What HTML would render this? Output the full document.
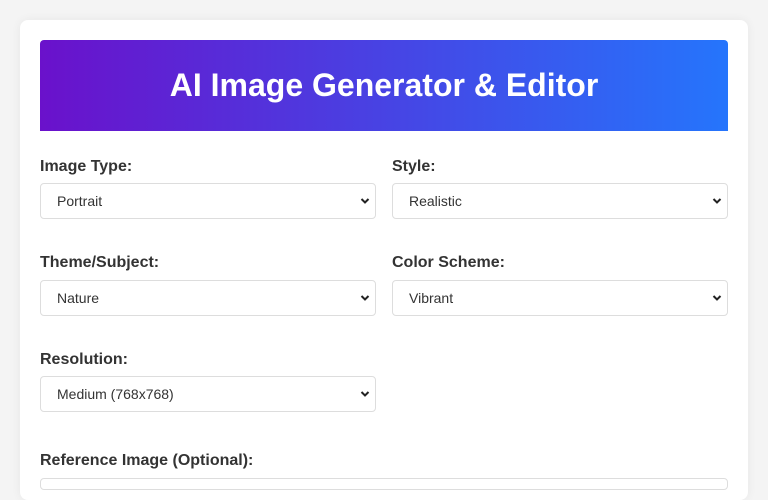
<!DOCTYPE html>
<html><head><style>
body{margin:0;width:768px;height:480px;overflow:hidden;background:#f4f4f4;font-family:"Liberation Sans",sans-serif;position:relative}
.card{position:absolute;left:20px;top:20px;width:728px;height:480px;background:#fff;border-radius:8px;box-shadow:0 0 10px rgba(0,0,0,.06)}
.hdr{position:absolute;left:40px;top:40px;width:688px;height:91px;background:linear-gradient(90deg,#6a11cb,#2575fc);color:#fff;font-weight:bold;font-size:32px;text-align:center;line-height:91px;border-radius:4px 4px 0 0}
.lb{position:absolute;font-weight:bold;font-size:16px;color:#333;line-height:18px}
.sel{position:absolute;width:334px;height:34px;border:1px solid #ddd;border-radius:4px;background:#fff;font-size:14px;color:#333;line-height:34px;box-sizing:content-box}
.sel span{position:absolute;left:16px}
.sel svg{position:absolute;right:5px;top:13px}
</style></head><body>
<div class="card"></div>
<div class="hdr">AI Image Generator &amp; Editor</div>
<div class="lb" style="left:40px;top:158px">Image Type:</div>
<div class="lb" style="left:392px;top:158px">Style:</div>
<div class="sel" style="left:40px;top:183px"><span>Portrait</span><svg width="10" height="8" viewBox="0 0 10 8"><path d="M1.5 2 L5 5.5 L8.5 2" stroke="#222" stroke-width="2" fill="none"/></svg></div>
<div class="sel" style="left:392px;top:183px"><span>Realistic</span><svg width="10" height="8" viewBox="0 0 10 8"><path d="M1.5 2 L5 5.5 L8.5 2" stroke="#222" stroke-width="2" fill="none"/></svg></div>
<div class="lb" style="left:40px;top:254px">Theme/Subject:</div>
<div class="lb" style="left:392px;top:254px">Color Scheme:</div>
<div class="sel" style="left:40px;top:280px"><span>Nature</span><svg width="10" height="8" viewBox="0 0 10 8"><path d="M1.5 2 L5 5.5 L8.5 2" stroke="#222" stroke-width="2" fill="none"/></svg></div>
<div class="sel" style="left:392px;top:280px"><span>Vibrant</span><svg width="10" height="8" viewBox="0 0 10 8"><path d="M1.5 2 L5 5.5 L8.5 2" stroke="#222" stroke-width="2" fill="none"/></svg></div>
<div class="lb" style="left:40px;top:351px">Resolution:</div>
<div class="sel" style="left:40px;top:376px"><span>Medium (768x768)</span><svg width="10" height="8" viewBox="0 0 10 8"><path d="M1.5 2 L5 5.5 L8.5 2" stroke="#222" stroke-width="2" fill="none"/></svg></div>
<div class="lb" style="left:40px;top:452px">Reference Image (Optional):</div>
<div style="position:absolute;left:40px;top:478px;width:686px;height:10px;border:1px solid #ddd;border-radius:4px"></div>
</body></html>
